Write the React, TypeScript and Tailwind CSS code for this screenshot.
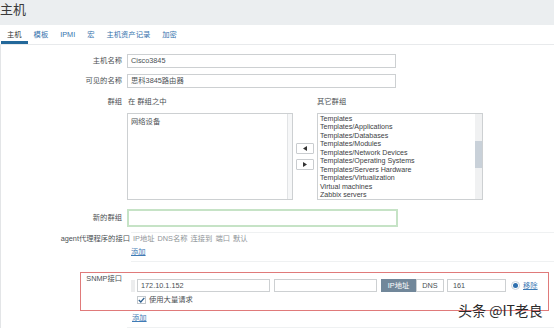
import React from 'react';

const tabs = ['主机', '模板', 'IPMI', '宏', '主机资产记录', '加密'];

const otherGroups = [
  'Templates',
  'Templates/Applications',
  'Templates/Databases',
  'Templates/Modules',
  'Templates/Network Devices',
  'Templates/Operating Systems',
  'Templates/Servers Hardware',
  'Templates/Virtualization',
  'Virtual machines',
  'Zabbix servers',
];

const interfaceCols = ['IP地址', 'DNS名称', '连接到', '端口', '默认'];

const Arrow = ({ dir }: { dir: 'left' | 'right' }) => (
  <button className="w-[18px] h-[11px] border border-[#c9cccf] bg-white rounded-[1px] flex items-center justify-center">
    <svg width="4" height="5" viewBox="0 0 4 5">
      {dir === 'left' ? <path d="M4 0 L0 2.5 L4 5 Z" fill="#333" /> : <path d="M0 0 L4 2.5 L0 5 Z" fill="#333" />}
    </svg>
  </button>
);

// little dotted grip in front of an interface row
const DragHandle = () => (
  <svg width="4" height="12" viewBox="0 0 4 12" className="ml-[1px]">
    {[0, 1, 2, 3, 4, 5].map((r) => (
      <g key={r}>
        <rect x="0.5" y={0.5 + r * 2} width="1" height="1" fill="#b4b8bc" />
        <rect x="2.5" y={0.5 + r * 2} width="1" height="1" fill="#b4b8bc" />
      </g>
    ))}
  </svg>
);

export default function App() {
  return (
    <div className="relative w-[554px] h-[328px] overflow-hidden bg-white text-[#4b5054] font-['Liberation_Sans','Noto_Sans_CJK_SC',sans-serif] text-[7.3px] leading-none">
      {/* Page header */}
      <div className="h-[25px] bg-[#ebeef0] pt-[3px]">
        <h1 className="text-[13px] font-normal text-[#3a3a3a] leading-none">主机</h1>
      </div>

      {/* Tabs */}
      <div className="h-[20px] flex items-stretch border-b border-[#e8eaec] pl-[1px]">
        {tabs.map((t, i) => (
          <div
            key={t}
            className={`px-[6px] flex items-center ${
              i === 0 ? 'border-b-[3px] border-[#23689a] text-[#333] pt-[3px]' : 'text-[#3673ad]'
            }`}
          >
            {t}
          </div>
        ))}
      </div>

      {/* Form */}
      <div className="border-l border-[#e3e5e7] h-[283px] flex flex-col">
        <div className="mt-[9px] flex items-center h-[14px]">
          <div className="w-[121px] text-right">主机名称</div>
          <div className="ml-[5px] w-[269px] h-[14px] border border-[#cdd0d2] pl-[3px] flex items-center">Cisco3845</div>
        </div>

        <div className="mt-[6px] flex items-center h-[14px]">
          <div className="w-[121px] text-right">可见的名称</div>
          <div className="ml-[5px] w-[269px] h-[14px] border border-[#cdd0d2] pl-[3px] flex items-center">思科3845路由器</div>
        </div>

        <div className="mt-[8px] flex items-center h-[12px]">
          <div className="w-[121px] text-right">群组</div>
          <div className="ml-[5px] w-[190px] pl-[1px]">在 群组之中</div>
          <div>其它群组</div>
        </div>

        <div className="mt-[5px] flex h-[87px]">
          <div className="w-[126px]" />
          <div className="w-[166px] border border-[#cdd0d2] flex">
            <div className="flex-1 pl-[3px] pt-[4px]">网络设备</div>
            <div className="w-[5px] border-l border-[#e2e4e6] bg-[#f6f7f8]" />
          </div>
          <div className="w-[24px] flex flex-col items-center justify-center gap-[5px]">
            <Arrow dir="left" />
            <Arrow dir="right" />
          </div>
          <div className="w-[166px] border border-[#cdd0d2] flex">
            <div className="flex-1 pl-[2px] pt-[1px] leading-[8.45px] text-[7.1px] text-[#3d4144]">
              {otherGroups.map((g) => (
                <div key={g} className="whitespace-nowrap">{g}</div>
              ))}
            </div>
            <div className="w-[7px] bg-[#f0f1f2]">
              <div className="mt-[27px] h-[27px] bg-[#c9d1d9]" />
            </div>
          </div>
        </div>

        <div className="mt-[9px] flex items-center h-[18px]">
          <div className="w-[121px] text-right">新的群组</div>
          <div className="ml-[5px] w-[271px] h-[18px] border-2 border-[#c6e3c6] bg-white" />
        </div>

        <div className="mt-[5px] flex">
          <div className="w-[129px] h-[13px] pt-[1px] flex items-center justify-end whitespace-nowrap">agent代理程序的接口</div>
          <div className="ml-[1px] flex-1 border-t border-[#eff1f2] border-b pb-[4px]">
            <div className="h-[12px] flex items-center gap-[3px] pl-[2px] text-[#8f9498]">
              {interfaceCols.map((c) => (
                <span key={c}>{c}</span>
              ))}
            </div>
            <div className="mt-[2px] h-[10px] flex items-center">
              <a className="text-[#3f7bb5] underline">添加</a>
            </div>
          </div>
        </div>

        {/* SNMP interface */}
        <div className="mt-[10px] ml-[79px] w-[469px] h-[39px] border border-[#e07a7a] flex">
          <div className="w-[41px] text-right pt-[2px]">SNMP接口</div>
          <div className="ml-[8px] pt-[6px] flex flex-col">
            <div className="h-[13px] flex items-center">
              <DragHandle />
              <div className="ml-[2px] w-[133px] h-[13px] border border-[#cdd0d2] pl-[3px] flex items-center">172.10.1.152</div>
              <div className="ml-[4px] w-[103px] h-[13px] border border-[#cdd0d2]" />
              <div className="ml-[4px] w-[35px] h-[13px] bg-[#71879a] text-white flex items-center justify-center">IP地址</div>
              <div className="w-[28px] h-[13px] border border-[#cdd0d2] bg-white flex items-center justify-center">DNS</div>
              <div className="ml-[3px] w-[59px] h-[13px] border border-[#cdd0d2] pl-[5px] flex items-center">161</div>
              <div className="ml-[5px] w-[9px] h-[9px] rounded-full border border-[#c9d3dc] bg-white flex items-center justify-center">
                <div className="w-[5px] h-[5px] rounded-full bg-[#2d6fae]" />
              </div>
              <a className="ml-[3px] text-[#3f7bb5] underline">移除</a>
            </div>
            <div className="mt-[4px] flex items-center">
              <div className="ml-[7px] w-[9px] h-[8px] border border-[#c3c8cc] bg-white flex items-center justify-center">
                <svg width="7" height="6" viewBox="0 0 7 6">
                  <path d="M0.8 3 L2.8 5 L6.3 0.8" fill="none" stroke="#2e5f8e" strokeWidth="1.3" />
                </svg>
              </div>
              <span className="ml-[3px]">使用大量请求</span>
            </div>
          </div>
        </div>

        <div className="ml-[126px] border-b border-[#eff1f2] pb-[6px]">
          <div className="mt-[3px] pl-[5px] h-[7px] flex items-center">
            <a className="text-[#3f7bb5] underline">添加</a>
          </div>
        </div>
      </div>

      {/* watermark */}
      <div className="absolute left-[458px] top-[303px] text-[14px] leading-none text-[#2b2b2b] font-['Noto_Sans_CJK_SC',sans-serif]">
        头条 @IT老良
      </div>
    </div>
  );
}
